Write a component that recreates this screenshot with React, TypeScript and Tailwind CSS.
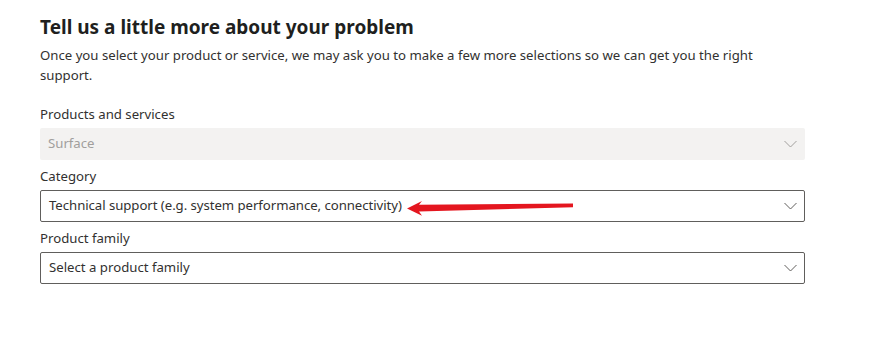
import React from "react";

function Chevron({ color }: { color: string }) {
  return (
    <svg width="13" height="8" viewBox="0 0 13 8" fill="none">
      <path d="M0.5 1 L6.5 7 L12.5 1" stroke={color} strokeWidth="1" />
    </svg>
  );
}

function Arrow() {
  return (
    <svg
      className="absolute left-[360px] top-[5px]"
      width="180"
      height="22"
      viewBox="0 0 180 22"
    >
      <path
        d="M6 12.5 L21 5 L18 8.8 L172 7.6 L172 11.2 L18 15.6 L21 19.8 Z"
        fill="#e4161f"
      />
    </svg>
  );
}

export default function App() {
  return (
    <div
      className="w-[878px] h-[340px] bg-white px-10 pt-[13px]"
      style={{ fontFamily: '"Noto Sans", "Open Sans", sans-serif' }}
    >
      <div className="w-[765px]">
        <h1 className="text-[19px] leading-[28px] font-bold text-[#201f1e]">
          Tell us a little more about your problem
        </h1>
        <p className="mt-1 text-[13.2px] leading-[20px] text-[#323130]">
          Once you select your product or service, we may ask you to make a few
          more selections so we can get you the right support.
        </p>

        <div className="mt-[19px] text-[13.2px] leading-[20px] text-[#323130]">
          Products and services
        </div>
        <div className="mt-1 flex h-[32px] items-center justify-between rounded-[2px] bg-[#f3f2f1] pl-2 pr-[8px] text-[13.2px] text-[#a19f9d]">
          <span>Surface</span>
          <Chevron color="#a19f9d" />
        </div>

        <div className="mt-[6px] text-[13.2px] leading-[20px] text-[#323130]">
          Category
        </div>
        <div className="relative mt-1 flex h-[32px] items-center justify-between rounded-[2px] border border-[#605e5c] pl-2 pr-[7px] text-[13.2px] text-[#323130]">
          <span className="tracking-[-0.05px]">
            Technical support (e.g. system performance, connectivity)
          </span>
          <Chevron color="#605e5c" />
          <Arrow />
        </div>

        <div className="mt-[6px] text-[13.2px] leading-[20px] text-[#323130]">
          Product family
        </div>
        <div className="mt-1 flex h-[32px] items-center justify-between rounded-[2px] border border-[#605e5c] pl-2 pr-[7px] text-[13.2px] text-[#323130]">
          <span>Select a product family</span>
          <Chevron color="#605e5c" />
        </div>
      </div>
    </div>
  );
}
